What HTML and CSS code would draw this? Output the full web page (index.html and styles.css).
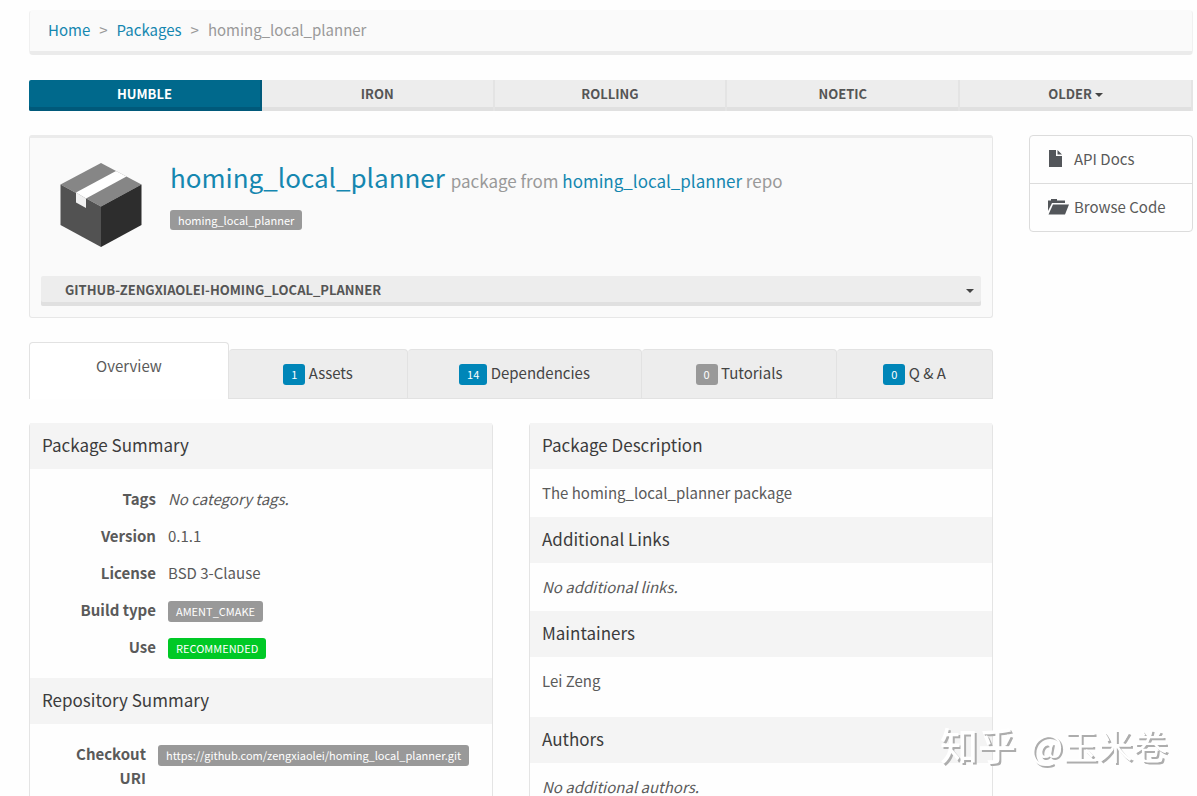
FILE: index.html
```html
<!DOCTYPE html>
<html lang="en">
<head>
  <meta charset="UTF-8">
  <meta name="viewport" content="width=device-width, initial-scale=1">
  <title>homing_local_planner</title>
  <link rel="stylesheet" href="styles.css">
</head>
<body>
  <nav class="breadcrumb">
    <a href="#">Home</a>
    <span class="sep">&gt;</span>
    <a href="#">Packages</a>
    <span class="sep">&gt;</span>
    <span class="current">homing_local_planner</span>
  </nav>

  <div class="distros">
    <button class="distro active" type="button">HUMBLE</button>
    <button class="distro" type="button">IRON</button>
    <button class="distro" type="button">ROLLING</button>
    <button class="distro" type="button">NOETIC</button>
    <button class="distro" type="button">OLDER <span class="caret"></span></button>
  </div>

  <div class="columns">
    <main class="main">
      <header class="package">
        <div class="package-top">
          <svg class="package-icon" viewBox="0 0 82 84" width="82" height="84" aria-hidden="true">
            <path d="M41 0 L81.500 21.500 L41 43.500 L0.500 21.500 Z" fill="#868686"/>
            <path d="M0.500 21.500 L41 43.500 V84 L0.500 62 Z" fill="#525252"/>
            <path d="M81.500 21.500 L41 43.500 V84 L81.500 62 Z" fill="#2d2d2d"/>
            <path d="M56 8 L66.500 13.500 L26 35.500 L16 29.500 Z" fill="#fff"/>
            <path d="M16 29.500 L26 35.500 V45 L16 39.500 Z" fill="#f0f0f0"/>
          </svg>
          <div class="package-info">
            <h1><a href="#">homing_local_planner</a> <small>package from <a href="#">homing_local_planner</a> repo</small></h1>
            <span class="label">homing_local_planner</span>
          </div>
        </div>
        <div class="repo-select">
          <select aria-label="Repository">
            <option>GITHUB-ZENGXIAOLEI-HOMING_LOCAL_PLANNER</option>
          </select>
          <span class="caret"></span>
        </div>
      </header>

      <nav class="tabs">
        <a class="tab active" href="#">Overview</a>
        <a class="tab" href="#"><span class="label blue">1</span> Assets</a>
        <a class="tab" href="#"><span class="label blue">14</span> Dependencies</a>
        <a class="tab" href="#"><span class="label">0</span> Tutorials</a>
        <a class="tab" href="#"><span class="label blue">0</span> Q &amp; A</a>
      </nav>

      <div class="panels">
        <section class="panel">
          <h2>Package Summary</h2>
          <div class="panel-body">
            <table>
              <tr><th scope="row">Tags</th><td><em>No category tags.</em></td></tr>
              <tr><th scope="row">Version</th><td>0.1.1</td></tr>
              <tr><th scope="row">License</th><td>BSD 3-Clause</td></tr>
              <tr><th scope="row">Build type</th><td><span class="label">AMENT_CMAKE</span></td></tr>
              <tr><th scope="row">Use</th><td><span class="label green">RECOMMENDED</span></td></tr>
            </table>
          </div>
          <h2>Repository Summary</h2>
          <div class="panel-body">
            <table class="repository">
              <tr><th scope="row">Checkout URI</th><td><span class="label">https://github.com/zengxiaolei/homing_local_planner.git</span></td></tr>
            </table>
          </div>
        </section>

        <section class="panel">
          <h2>Package Description</h2>
          <div class="panel-body">The homing_local_planner package</div>
          <h2>Additional Links</h2>
          <div class="panel-body"><em>No additional links.</em></div>
          <h2>Maintainers</h2>
          <div class="panel-body">
            <ul class="people">
              <li>Lei Zeng</li>
            </ul>
          </div>
          <h2>Authors</h2>
          <div class="panel-body"><em>No additional authors.</em></div>
        </section>
      </div>
    </main>

    <aside class="sidebar">
      <a href="#">
        <svg viewBox="0 0 22 18" width="22" height="18" aria-hidden="true">
          <path d="M1 0 H8 V6 H14 V17 H1 Z M9.500 0 L14 4.500 H9.500 Z" fill="#53565a"/>
        </svg>
        API Docs
      </a>
      <a href="#">
        <svg viewBox="0 0 22 18" width="22" height="18" aria-hidden="true">
          <path d="M0 13 V2.500 H3 V1 H9 V2.500 H17 V5 H4 Z" fill="#53565a"/>
          <path d="M5 6.500 H21 L17 16.500 H0.500 Z" fill="#53565a"/>
        </svg>
        Browse Code
      </a>
    </aside>
  </div>

  <div class="watermark" lang="zh"><span>知乎</span> @玉米卷</div>
</body>
</html>
```
FILE: styles.css
```css
* {
  box-sizing: border-box;
}

body {
  margin: 0;
  padding: 10px 4px 0 29px;
  background: #fefefe;
  color: #5a5a5a;
  font-family: "Noto Sans CJK SC", "Open Sans", sans-serif;
  font-size: 15px;
  line-height: 24px;
}

a {
  color: #1587b0;
  text-decoration: none;
}

.breadcrumb {
  display: flex;
  gap: 9px;
  margin-bottom: 25px;
  padding: 7px 18px 9px;
  background: #fafafa;
  border: 1px solid #f0f0f0;
  border-top-color: #fafafa;
  border-bottom: 4px solid #ebebeb;
  border-radius: 4px;
}

.sep,
.current {
  color: #999;
}

.distros {
  display: flex;
  margin-bottom: 24px;
}

.distro {
  flex: 1;
  height: 31px;
  padding: 0 0 3px;
  background: #ededed;
  border: 0;
  border-right: 2px solid #e4e4e4;
  box-shadow: inset 0 -4px #e0e0e0;
  color: #555;
  font-family: inherit;
  font-size: 13px;
  font-weight: bold;
  line-height: 24px;
}

.distro.active {
  background: #00698c;
  border-color: #00597a;
  border-radius: 2px 0 0 2px;
  box-shadow: inset 0 -4px #00597a;
  color: #fff;
}

.caret {
  display: inline-block;
  border-top: 4px solid #444;
  border-left: 4px solid transparent;
  border-right: 4px solid transparent;
  vertical-align: middle;
}

.columns {
  display: grid;
  grid-template-columns: repeat(12, 1fr);
  gap: 36px;
}

.main {
  grid-column: span 10;
  min-width: 0;
}

.package {
  margin-bottom: 24px;
  padding: 0 11px 11px;
  background: #fafafa;
  border: 1px solid #e7e7e7;
  border-top: 3px solid #ebebeb;
  border-radius: 3px;
}

.package-top {
  display: flex;
  gap: 28px;
  padding: 24px 19px 29px;
}

.package-icon {
  margin-top: 1px;
}

h1 {
  margin: 0 0 14px;
  font-size: 26px;
  font-weight: normal;
  line-height: 30px;
}

h1 small {
  color: #999;
  font-size: 17px;
}

.label {
  display: inline-block;
  margin-top: 3px;
  padding: 0 8px;
  background: #999;
  border-radius: 3px;
  color: #fff;
  font-size: 11px;
  line-height: 21px;
  vertical-align: top;
}

.label.blue {
  background: #0086b8;
}

.label.green {
  background: #00c926;
}

.package-info .label {
  display: table;
  margin: 0;
  line-height: 20px;
}

.repo-select {
  position: relative;
}

.repo-select select {
  display: block;
  width: 100%;
  height: 30px;
  padding: 0 24px 4px;
  appearance: none;
  background: #ededed;
  border: 0;
  border-radius: 2px;
  box-shadow: inset 0 -4px #e0e0e0;
  color: #555;
  font-family: inherit;
  font-size: 13px;
  font-weight: bold;
}

.repo-select .caret {
  position: absolute;
  right: 7px;
  top: 13px;
}

.tabs {
  display: grid;
  grid-template-columns: 200fr 179fr 234fr 195fr 156fr;
  align-items: end;
  margin-bottom: 24px;
}

.tab {
  padding: 11px 0 13px;
  background: #ededed;
  border: 1px solid #e2e2e2;
  border-left: 0;
  border-radius: 4px 4px 0 0;
  color: #444;
  text-align: center;
}

.tab.active {
  padding: 11px 0 21px;
  background: #fff;
  border-left: 1px solid #e2e2e2;
  border-bottom: 0;
  color: #5a5a5a;
}

.panels {
  display: grid;
  grid-template-columns: 1fr 1fr;
  gap: 36px;
}

.panel {
  border: 1px solid #e4e4e4;
  border-top: 0;
  border-radius: 4px;
}

h2 {
  margin: 0;
  padding: 10px 12px 12px;
  background: #f4f4f4;
  color: #3c3c3c;
  font-size: 17px;
  font-weight: normal;
  line-height: 24px;
}

.panel-body {
  padding: 12px;
}

table {
  width: 100%;
  border-collapse: collapse;
  table-layout: fixed;
}

th,
td {
  padding: 6px 6px 7px;
  vertical-align: top;
}

th {
  width: 120px;
  text-align: right;
}

td {
  text-align: left;
}

.repository th {
  width: 110px;
}

.people {
  margin: 0 0 12px;
  padding: 0;
  list-style: none;
}

.sidebar {
  grid-column: span 2;
  align-self: start;
  border: 1px solid #dcdcdc;
  border-radius: 4px;
}

.sidebar a {
  display: flex;
  align-items: center;
  gap: 4px;
  padding: 11px 0 12px 18px;
  color: #5a5a5a;
  white-space: nowrap;
}

.sidebar a + a {
  border-top: 1px solid #dcdcdc;
}

.watermark {
  position: fixed;
  right: 29px;
  bottom: 26px;
  color: #fff;
  font-size: 35px;
  line-height: 50px;
  text-shadow: 2px 2px 0 #adadad;
  white-space: nowrap;
}

.watermark span {
  margin-right: 6px;
  font-size: 38px;
  font-weight: 500;
}
```
